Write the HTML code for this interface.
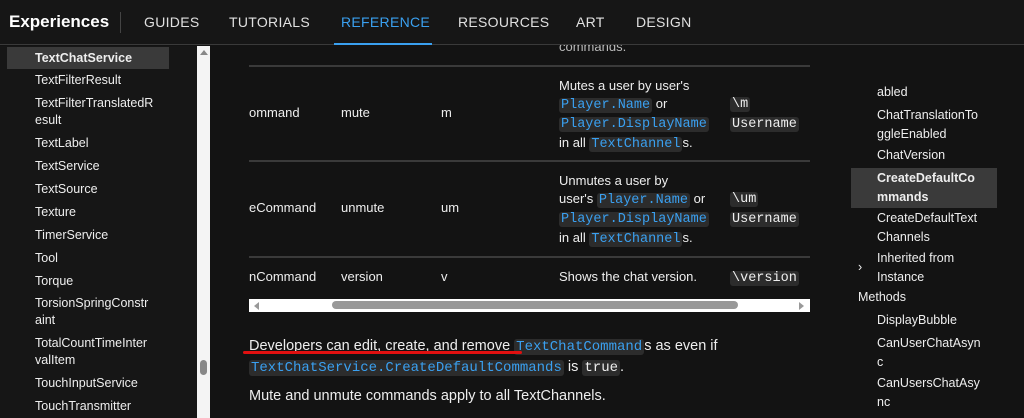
<!DOCTYPE html>
<html><head><style>
*{margin:0;padding:0;box-sizing:border-box}
body{width:1024px;height:418px;overflow:hidden;background:#131313;font-family:"Liberation Sans",sans-serif;color:#e8e8e8;position:relative}
.hdr{position:absolute;left:0;top:0;width:1024px;height:45px;background:#161616;border-bottom:1px solid #3a3a3a;z-index:5}
.hdr .logo{position:absolute;left:9px;top:12px;font-size:17px;font-weight:bold;color:#fff}
.hdr .sep{position:absolute;left:120px;top:12px;width:1px;height:21px;background:#444}
.hdr .n{position:absolute;top:14px;font-size:14px;color:#e0e0e0;letter-spacing:.3px}
.hdr .act{color:#3aa0f0}
.ul{position:absolute;left:334px;top:43px;width:98px;height:2px;background:#3aa0f0}
.side{position:absolute;left:0;top:46px;width:197px;height:372px;background:#161616}
.side div{position:absolute;left:35px;font-size:12.5px;line-height:17px;color:#eee;width:130px}
.sb{position:absolute;left:197px;top:46px;width:13px;height:372px;background:#f4f4f4}
.mono{font-family:"Liberation Mono",monospace;font-size:13.5px;background:#2c2c2c;border-radius:3px;padding:0 2px}
.bl{color:#3aa0f0}
.cell{position:absolute;font-size:13px;line-height:17.5px;color:#eee}
.line{position:absolute;left:249px;width:561px;height:2px;background:#3a3a3a}
.toc div{position:absolute;left:877px;font-size:12.5px;line-height:19px;color:#eee;width:120px}
</style></head><body>
<div class="hdr">
<div class="logo">Experiences</div><div class="sep"></div>
<div class="n" style="left:144px">GUIDES</div>
<div class="n" style="left:229px">TUTORIALS</div>
<div class="n act" style="left:341px">REFERENCE</div>
<div class="n" style="left:458px">RESOURCES</div>
<div class="n" style="left:576px">ART</div>
<div class="n" style="left:636px">DESIGN</div>
<div class="ul"></div>
</div>
<div class="side">
<div style="left:7px;top:1px;width:162px;height:22px;background:#3a3a3a"></div>
<div style="top:4px;font-weight:bold">TextChatService</div>
<div style="top:26px">TextFilterResult</div>
<div style="top:49px">TextFilterTranslatedR<br>esult</div>
<div style="top:89px">TextLabel</div>
<div style="top:112px">TextService</div>
<div style="top:135px">TextSource</div>
<div style="top:158px">Texture</div>
<div style="top:181px">TimerService</div>
<div style="top:204px">Tool</div>
<div style="top:227px">Torque</div>
<div style="top:249px">TorsionSpringConstr<br>aint</div>
<div style="top:289px">TotalCountTimeInter<br>valItem</div>
<div style="top:329px">TouchInputService</div>
<div style="top:352px">TouchTransmitter</div>
</div>
<div class="sb">
<div style="position:absolute;left:3px;top:4px;width:0;height:0;border-left:4px solid transparent;border-right:4px solid transparent;border-bottom:5px solid #888"></div>
<div style="position:absolute;left:3px;top:314px;width:7px;height:15px;border-radius:4px;background:#888"></div>
</div>
<div class="cell" style="left:559px;top:38px;color:#bbb">commands.</div>
<div class="line" style="top:65px"></div>
<div class="cell" style="left:249px;top:104px">ommand</div>
<div class="cell" style="left:341px;top:104px">mute</div>
<div class="cell" style="left:441px;top:104px">m</div>
<div class="cell" style="left:559px;top:77px">Mutes a user by user's<br><span class="mono bl">Player.Name</span> or<br><span class="mono bl">Player.DisplayName</span><br>in all <span class="mono bl">TextChannel</span>s.</div>
<div class="cell" style="left:730px;top:94px"><span class="mono">\m</span><br><span class="mono">Username</span></div>
<div class="line" style="top:160px"></div>
<div class="cell" style="left:249px;top:199px">eCommand</div>
<div class="cell" style="left:341px;top:199px">unmute</div>
<div class="cell" style="left:441px;top:199px">um</div>
<div class="cell" style="left:559px;top:172px">Unmutes a user by<br>user's <span class="mono bl">Player.Name</span> or<br><span class="mono bl">Player.DisplayName</span><br>in all <span class="mono bl">TextChannel</span>s.</div>
<div class="cell" style="left:730px;top:189px"><span class="mono">\um</span><br><span class="mono">Username</span></div>
<div class="line" style="top:256px"></div>
<div class="cell" style="left:249px;top:268px">nCommand</div>
<div class="cell" style="left:341px;top:268px">version</div>
<div class="cell" style="left:441px;top:268px">v</div>
<div class="cell" style="left:559px;top:268px">Shows the chat version.</div>
<div class="cell" style="left:730px;top:268px"><span class="mono">\version</span></div>
<div style="position:absolute;left:249px;top:299px;width:561px;height:13px;background:#fff">
<div style="position:absolute;left:5px;top:3px;border-top:4px solid transparent;border-bottom:4px solid transparent;border-right:5px solid #999"></div>
<div style="position:absolute;left:83px;top:2px;width:406px;height:8px;border-radius:4px;background:#999"></div>
<div style="position:absolute;right:6px;top:3px;border-top:4px solid transparent;border-bottom:4px solid transparent;border-left:5px solid #999"></div>
</div>
<div class="cell" style="left:249px;top:336px;font-size:14.5px;line-height:20px;width:570px">Developers can edit, create, and remove <span class="mono bl" style="font-size:14px">TextChatCommand</span>s as even if<br><span class="mono bl" style="font-size:14px">TextChatService.CreateDefaultCommands</span> is <span class="mono" style="font-size:14px">true</span>.</div>
<div style="position:absolute;left:243px;top:351px;width:279px;height:3px;background:#e01010;border-radius:2px"></div>
<div class="cell" style="left:249px;top:388px;font-size:14.5px">Mute and unmute commands apply to all TextChannels.</div>
<div style="position:absolute;left:851px;top:168px;width:146px;height:40px;background:#3a3a3a"></div>
<div class="toc">
<div style="top:83px">abled</div>
<div style="top:106px">ChatTranslationTo<br>ggleEnabled</div>
<div style="top:146px">ChatVersion</div>
<div style="top:169px;font-weight:bold">CreateDefaultCo<br>mmands</div>
<div style="top:209px">CreateDefaultText<br>Channels</div>
<div style="top:249px">Inherited from<br>Instance</div>
<div style="top:258px;left:858px">›</div>
<div style="top:288px;left:858px">Methods</div>
<div style="top:311px">DisplayBubble</div>
<div style="top:334px">CanUserChatAsyn<br>c</div>
<div style="top:374px">CanUsersChatAsy<br>nc</div>
</div>
</body></html>
